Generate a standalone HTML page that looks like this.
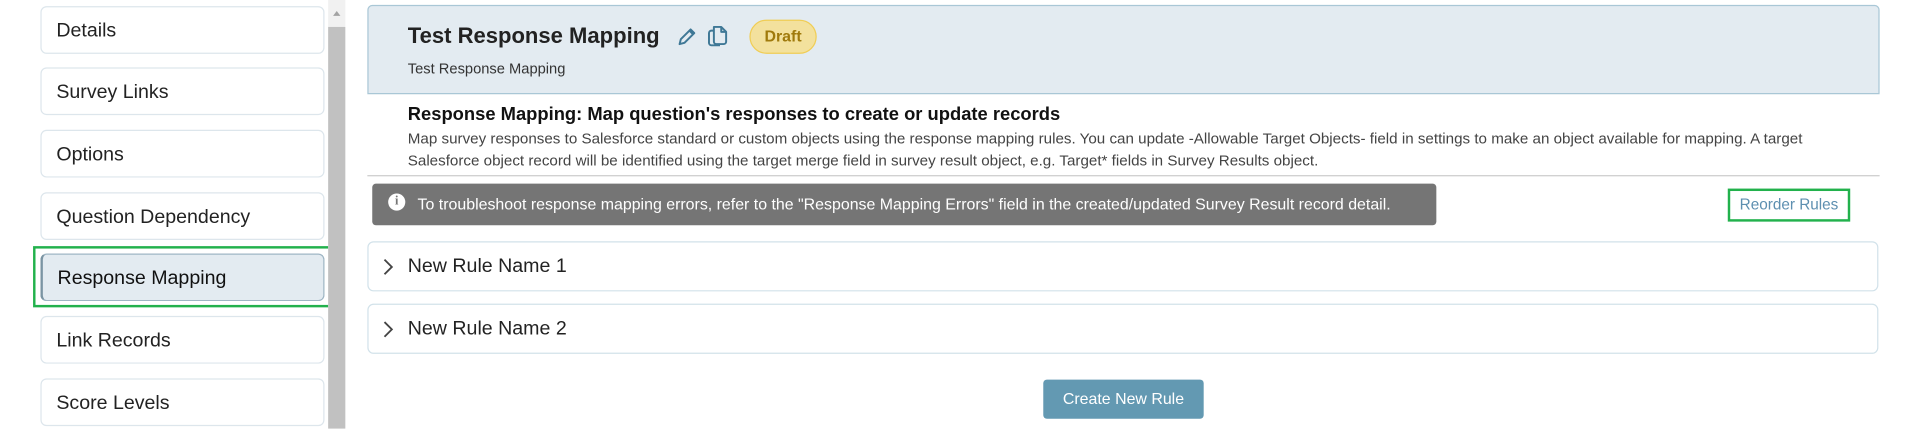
<!DOCTYPE html>
<html><head><meta charset="utf-8"><style>
html,body{margin:0;padding:0;background:#fff;overflow:hidden;width:1920px;height:428px}
#w{position:absolute;left:0;top:0;width:1568px;height:350px;transform:scale(1.2245);transform-origin:0 0;font-family:"Liberation Sans",sans-serif;color:#222}
.it{position:absolute;left:33px;width:232px;height:39px;border:1px solid #dde6ec;border-radius:5px;background:#fff;font-size:16px;line-height:39px;box-sizing:border-box;padding-left:12px;color:#222}
.sel{background:#e3ebf1;border-color:#9fb6c4}
.abs{position:absolute}
.acc{position:absolute;left:300px;width:1234px;height:41px;border:1px solid #d2e2ea;border-radius:5px;box-sizing:border-box;font-size:16px;line-height:39px;padding-left:32px}
.acc svg{position:absolute;left:11px;top:13px}
</style></head><body><div id="w">
<div class="it" style="top:5px">Details</div>
<div class="it" style="top:55px">Survey Links</div>
<div class="it" style="top:106px">Options</div>
<div class="it" style="top:157px">Question Dependency</div>
<div class="abs" style="left:27px;top:201px;width:244px;height:50px;border:2px solid #22b14c;box-sizing:border-box"></div>
<div class="it sel" style="top:207px;border-left:2px solid #7a94a3;color:#111">Response Mapping</div>
<div class="it" style="top:258px">Link Records</div>
<div class="it" style="top:309px">Score Levels</div>
<div class="abs" style="left:268px;top:0;width:14px;height:350px;background:#f1f1f1"></div>
<div class="abs" style="left:268px;top:22px;width:14px;height:328px;background:#c1c1c1"></div>
<div class="abs" style="left:272px;top:9px;width:0;height:0;border-left:3px solid transparent;border-right:3px solid transparent;border-bottom:4px solid #a3a3a3"></div>

<div class="abs" style="left:300px;top:4px;width:1235px;height:73px;background:#e3ebf1;border:1px solid #a9c7d6;border-radius:4px 4px 0 0;box-sizing:border-box"></div>
<div class="abs" style="left:333px;top:19px;font-size:18px;font-weight:bold;color:#222">Test Response Mapping</div>
<svg class="abs" style="left:552px;top:21px" width="18" height="18" viewBox="0 0 18 18"><path d="M3 15 L4 11 L12 3 L15 6 L7 14 Z M11 4 L14 7" fill="none" stroke="#3f7896" stroke-width="1.6" stroke-linejoin="round"/></svg>
<svg class="abs" style="left:576px;top:19px" width="20" height="20" viewBox="0 0 20 20"><path d="M7 3 h6 l4 4 v8 a2 2 0 0 1 -2 2 h-6 a2 2 0 0 1 -2 -2z M13 3 v4 h4 M7 6 h-2 a2 2 0 0 0 -2 2 v8 a2 2 0 0 0 2 2 h7" fill="none" stroke="#3f7896" stroke-width="1.6" stroke-linejoin="round"/></svg>
<div class="abs" style="left:612px;top:16px;width:55px;height:28px;background:#f3e19d;border:1px solid #f0cd55;border-radius:14px;box-sizing:border-box;text-align:center;line-height:26px;font-size:13px;font-weight:bold;color:#a07a0c">Draft</div>
<div class="abs" style="left:333px;top:49px;font-size:12px;color:#333">Test Response Mapping</div>

<div class="abs" style="left:333px;top:85px;font-size:15px;font-weight:bold;color:#111">Response Mapping: Map question's responses to create or update records</div>
<div class="abs" style="left:333px;top:104px;font-size:12.4px;line-height:18px;color:#444;white-space:nowrap">Map survey responses to Salesforce standard or custom objects using the response mapping rules. You can update -Allowable Target Objects- field in settings to make an object available for mapping. A target<br>Salesforce object record will be identified using the target merge field in survey result object, e.g. Target* fields in Survey Results object.</div>
<div class="abs" style="left:300px;top:143px;width:1235px;height:1px;background:#ccc"></div>

<div class="abs" style="left:304px;top:150px;width:869px;height:34px;background:#757575;border-radius:3px;color:#fff;font-size:13px;line-height:34px;padding-left:37px;box-sizing:border-box;white-space:nowrap">To troubleshoot response mapping errors, refer to the "Response Mapping Errors" field in the created/updated Survey Result record detail.</div>
<div class="abs" style="left:317px;top:158px;width:14px;height:14px;border-radius:50%;background:#fff;color:#757575;font-size:10px;font-weight:bold;text-align:center;line-height:14px;font-family:'Liberation Serif',serif">i</div>
<div class="abs" style="left:1411px;top:154px;width:100px;height:27px;border:2px solid #22b14c;box-sizing:border-box;color:#5d8fb0;font-size:12.5px;text-align:center;line-height:23px">Reorder Rules</div>

<div class="acc" style="top:197px"><svg width="10" height="14" viewBox="0 0 10 14"><path d="M2 1 L8 7 L2 13" fill="none" stroke="#444" stroke-width="1.5"/></svg>New Rule Name 1</div>
<div class="acc" style="top:248px"><svg width="10" height="14" viewBox="0 0 10 14"><path d="M2 1 L8 7 L2 13" fill="none" stroke="#444" stroke-width="1.5"/></svg>New Rule Name 2</div>

<div class="abs" style="left:852px;top:310px;width:131px;height:32px;background:#6399b2;border-radius:3px;color:#fff;font-size:13px;text-align:center;line-height:32px">Create New Rule</div>
</div></body></html>
